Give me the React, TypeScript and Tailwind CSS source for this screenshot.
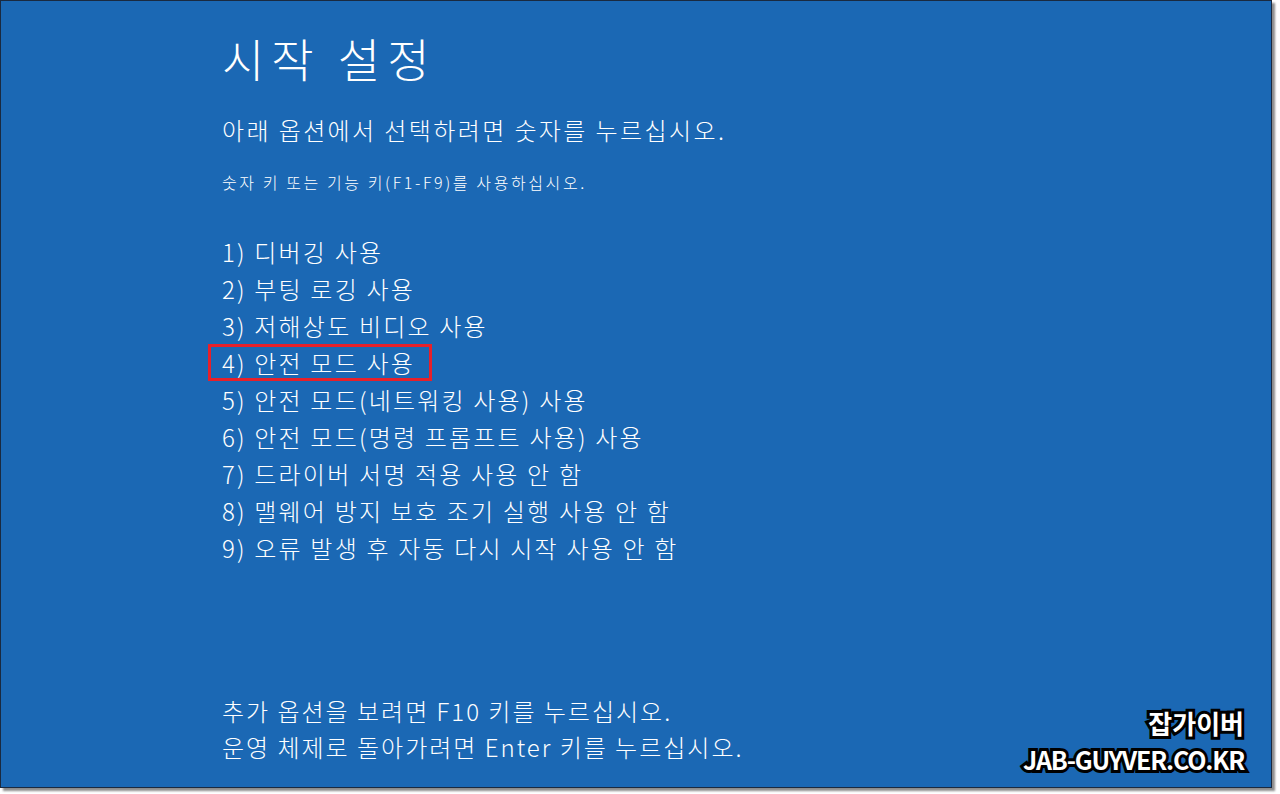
import React from 'react'

const options = [
  '1) 디버깅 사용',
  '2) 부팅 로깅 사용',
  '3) 저해상도 비디오 사용',
  '4) 안전 모드 사용',
  '5) 안전 모드(네트워킹 사용) 사용',
  '6) 안전 모드(명령 프롬프트 사용) 사용',
  '7) 드라이버 서명 적용 사용 안 함',
  '8) 맬웨어 방지 보호 조기 실행 사용 안 함',
  '9) 오류 발생 후 자동 다시 시작 사용 안 함',
]

const font = { fontFamily: '"Noto Sans CJK KR", "Noto Sans", sans-serif' }

export default function App() {
  return (
    <div className="w-[1280px] h-[794px] bg-white overflow-hidden" style={font}>
      <div className="w-[1272px] h-[788px] border border-[#1a2a40] bg-[#1b68b4] shadow-[3px_3px_2px_rgba(0,0,0,0.45)] flex flex-col pl-[221px] text-white">
        {/* heading */}
        <h1 className="mt-[27px] text-[46px] leading-[58px] font-light tracking-[7px]">시작 설정</h1>
        <p className="mt-[28px] text-[24px] leading-[32px] font-light tracking-[2.4px]">아래 옵션에서 선택하려면 숫자를 누르십시오.</p>
        <p className="mt-[26px] text-[16px] leading-[20px] font-light tracking-[2.6px]">숫자 키 또는 기능 키(F1-F9)를 사용하십시오.</p>

        {/* options */}
        <ul className="mt-[41px] flex flex-col">
          {options.map((o, i) => (
            <li key={i} className="h-[37px] text-[24px] leading-[37px] font-light tracking-[2.2px]">
              {i === 3 ? (
                <span className="inline-block w-[224px] h-[37px] -ml-[14px] pl-[11px] border-[3px] border-[#e8202a] leading-[31px]">{o}</span>
              ) : (
                o
              )}
            </li>
          ))}
        </ul>

        <div className="mt-auto mb-[22px] flex items-end justify-between pr-[27px]">
          <div className="text-[24px] leading-[36px] font-light tracking-[2px]">
            <p>추가 옵션을 보려면 F10 키를 누르십시오.</p>
            <p>운영 체제로 돌아가려면 Enter 키를 누르십시오.</p>
          </div>
          {/* watermark */}
          <div className="-mb-[12px] flex flex-col items-end font-bold leading-[36px] [-webkit-text-stroke:6px_black] [paint-order:stroke_fill]">
            <span className="text-[26px]">잡가이버</span>
            <span className="text-[25px] tracking-[-1.2px]">JAB-GUYVER.CO.KR</span>
          </div>
        </div>
      </div>
    </div>
  )
}
